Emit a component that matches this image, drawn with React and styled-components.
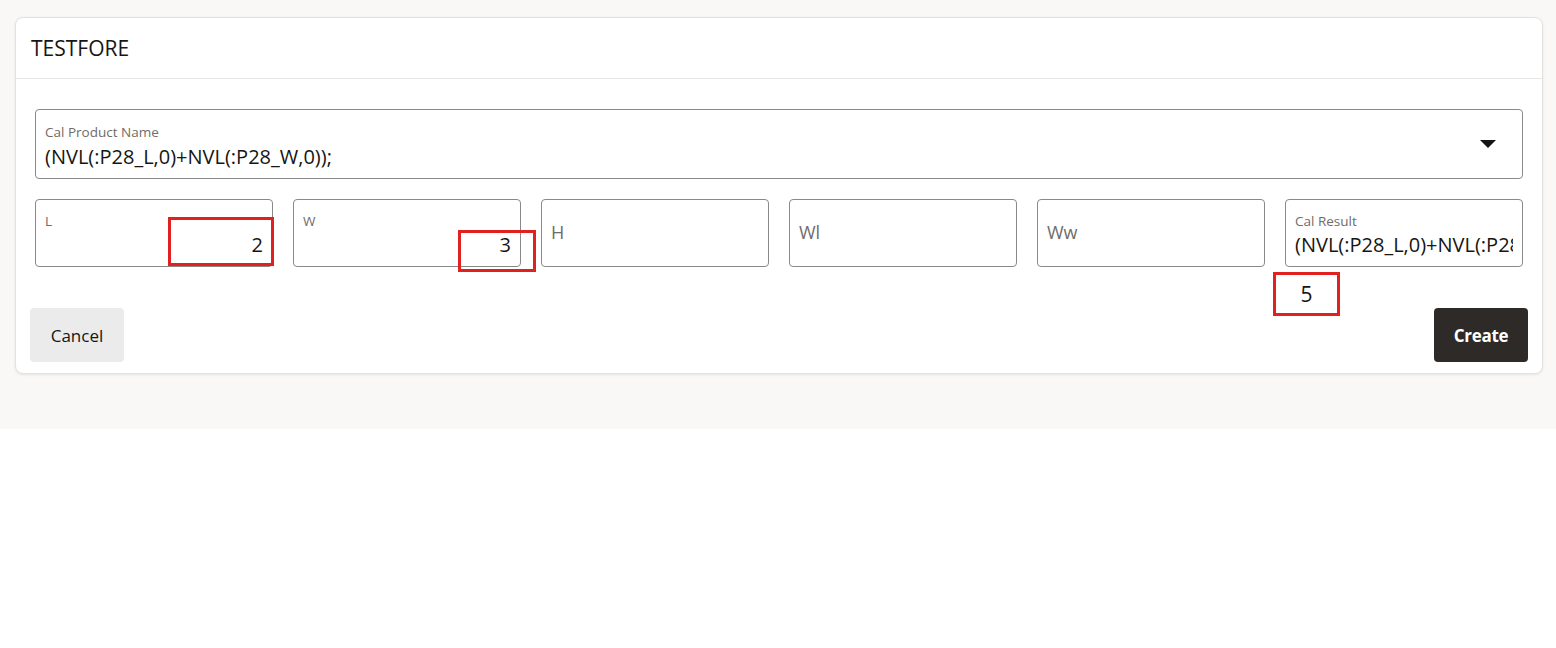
import React from "react";
import styled, { createGlobalStyle } from "styled-components";

const Global = createGlobalStyle`
  body {
    margin: 0;
    background: #ffffff;
    font-family: "Open Sans", "Noto Sans", sans-serif;
    color: #161513;
  }
`

const Page = styled.div`
  background: #f9f8f6;
  padding: 17px 13px 55px 15px;
`

const Card = styled.div`
  background: #ffffff;
  border: 1px solid #e4e2df;
  border-radius: 8px;
  box-shadow: 0 1px 3px rgba(0, 0, 0, 0.08);
`

const Header = styled.div`
  height: 60px;
  display: flex;
  align-items: center;
  padding-left: 15px;
  border-bottom: 1px solid #e8e6e3;
  font-size: 21px;
  color: #161513;
`

const Body = styled.div`
  padding: 30px 19px 0 19px;
  display: flex;
  flex-direction: column;
  gap: 20px;
`

const Field = styled.div`
  position: relative;
  box-sizing: border-box;
  height: ${p => p.$h || 68}px;
  border: 1px solid #8b8985;
  border-radius: 4px;
  padding: 0 9px;
  display: flex;
  flex-direction: column;
  justify-content: ${p => (p.$placeholder ? "center" : "flex-start")};
`

const Label = styled.div`
  font-size: 13.5px;
  color: #6f6c69;
  margin-top: ${p => p.$top || 13}px;
  line-height: 16px;
`

const Value = styled.div`
  font-size: 20px;
  line-height: 26px;
  margin-top: ${p => p.$top || 3}px;
  text-align: ${p => p.$align || "left"};
  white-space: nowrap;
  overflow: ${p => (p.$clip ? "hidden" : "visible")};
  color: #161513;
`

const Placeholder = styled.div`
  font-size: 18px;
  color: #6f6c69;
  margin-top: -2px;
`

const Caret = styled.div`
  position: absolute;
  right: 26px;
  top: 30px;
  width: 0;
  height: 0;
  border-left: 8px solid transparent;
  border-right: 8px solid transparent;
  border-top: 8px solid #161513;
`

const Row = styled.div`
  display: grid;
  grid-template-columns: 238px 228px 228px 228px 228px 238px;
  gap: 20px;
`

const Mark = styled.div`
  position: absolute;
  box-sizing: border-box;
  border: 3px solid #e1211f;
  pointer-events: none;
`

const MarkNumber = styled(Mark)`
  display: flex;
  align-items: center;
  justify-content: center;
  font-size: 21px;
  color: #161513;
  background: #ffffff;
`

const Footer = styled.div`
  display: flex;
  justify-content: space-between;
  padding: 41px 14px 11px 14px;
`

const Button = styled.button`
  height: 54px;
  width: 94px;
  border: none;
  border-radius: 4px;
  font-family: inherit;
  font-size: 17px;
  font-weight: ${p => (p.$primary ? 700 : 400)};
  background: ${p => (p.$primary ? "#2e2a27" : "#ebebeb")};
  color: ${p => (p.$primary ? "#ffffff" : "#161513")};
  letter-spacing: ${p => (p.$primary ? "-0.3px" : "0")};
`

function App() {
  return (
    <>
      <Global />
      <Page>
        <Card>
          <Header>TESTFORE</Header>
          <Body>
            <Field $h={70}>
              <Label $top={14}>Cal Product Name</Label>
              <Value $top={4}>(NVL(:P28_L,0)+NVL(:P28_W,0));</Value>
              <Caret />
            </Field>
            <Row>
              <Field>
                <Label>L</Label>
                <Value $align="right">2</Value>
                <Mark style={{ left: 132, top: 17, width: 106, height: 49 }} />
              </Field>
              <Field>
                <Label>W</Label>
                <Value $align="right">3</Value>
                <Mark style={{ left: 164, top: 30, width: 78, height: 42 }} />
              </Field>
              <Field $placeholder>
                <Placeholder>H</Placeholder>
              </Field>
              <Field $placeholder>
                <Placeholder>Wl</Placeholder>
              </Field>
              <Field $placeholder>
                <Placeholder>Ww</Placeholder>
              </Field>
              <Field>
                <Label>Cal Result</Label>
                <Value $clip>(NVL(:P28_L,0)+NVL(:P28_W,0));</Value>
                <MarkNumber style={{ left: -13, top: 72, width: 67, height: 44 }}>5</MarkNumber>
              </Field>
            </Row>
          </Body>
          <Footer>
            <Button>Cancel</Button>
            <Button $primary>Create</Button>
          </Footer>
        </Card>
      </Page>
    </>
  )
}

export default App
